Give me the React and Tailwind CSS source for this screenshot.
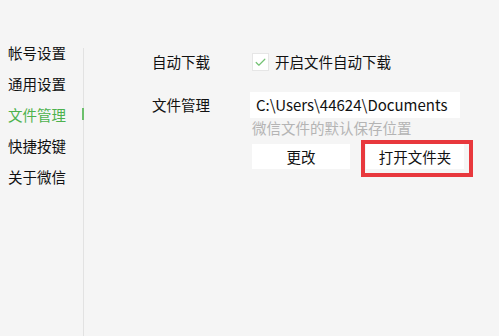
import { Check } from 'lucide-react'

const menu = ['帐号设置', '通用设置', '文件管理', '快捷按键', '关于微信']

function App() {
  const font = { fontFamily: '"Noto Sans CJK SC", "Noto Sans", sans-serif' }

  return (
    <div className="w-[499px] h-[336px] bg-[#f5f5f5] flex overflow-hidden text-[#111]" style={font}>
      <div className="w-[84px] shrink-0 pt-[37px] relative">
        <div className="absolute right-0 top-[48px] bottom-0 w-px bg-[#e2e2e2]"></div>
        {menu.map((item) => (
          <div key={item} className="relative h-[31px] flex items-center pl-[8px] text-[14.5px]">
            <span className={item === '文件管理' ? 'text-[#4db24d]' : ''}>{item}</span>
            {item === '文件管理' && (
              <div className="absolute right-0 top-[9px] w-[2px] h-[12px] bg-[#6cc06c]"></div>
            )}
          </div>
        ))}
      </div>

      <div className="flex-1 pl-[68px] pt-[50px] text-[14.5px]">
        <div className="flex items-center h-[24px]">
          <span className="w-[100px]">自动下载</span>
          <div className="w-[17px] h-[18px] bg-white border border-[#e6e6e6] flex items-center justify-center">
            <Check size={13} strokeWidth={2.2} className="text-[#74c274]" />
          </div>
          <span className="ml-[6px]">开启文件自动下载</span>
        </div>

        <div className="flex mt-[18px]">
          <span className="w-[98px] pt-[2px]">文件管理</span>
          <div className="flex flex-col">
            <div className="w-[210px] h-[26px] bg-white flex items-center pl-[6px] text-[15px]">
              C:\Users\44624\Documents
            </div>
            <div className="pl-[2px] text-[#b4b4b4] h-[22px] leading-[20px]">微信文件的默认保存位置</div>
            <div className="flex items-start mt-[4px]">
              <div className="w-[98px] h-[25px] ml-[2px] bg-white flex items-center justify-center">更改</div>
              <div className="ml-[11px] -mt-[4px] w-[112px] h-[37px] border-[4px] border-[#e8383d] pl-[1px]">
                <div className="w-[98px] h-[25px] bg-white flex items-center justify-center">打开文件夹</div>
              </div>
            </div>
          </div>
        </div>
      </div>
    </div>
  )
}

export default App
